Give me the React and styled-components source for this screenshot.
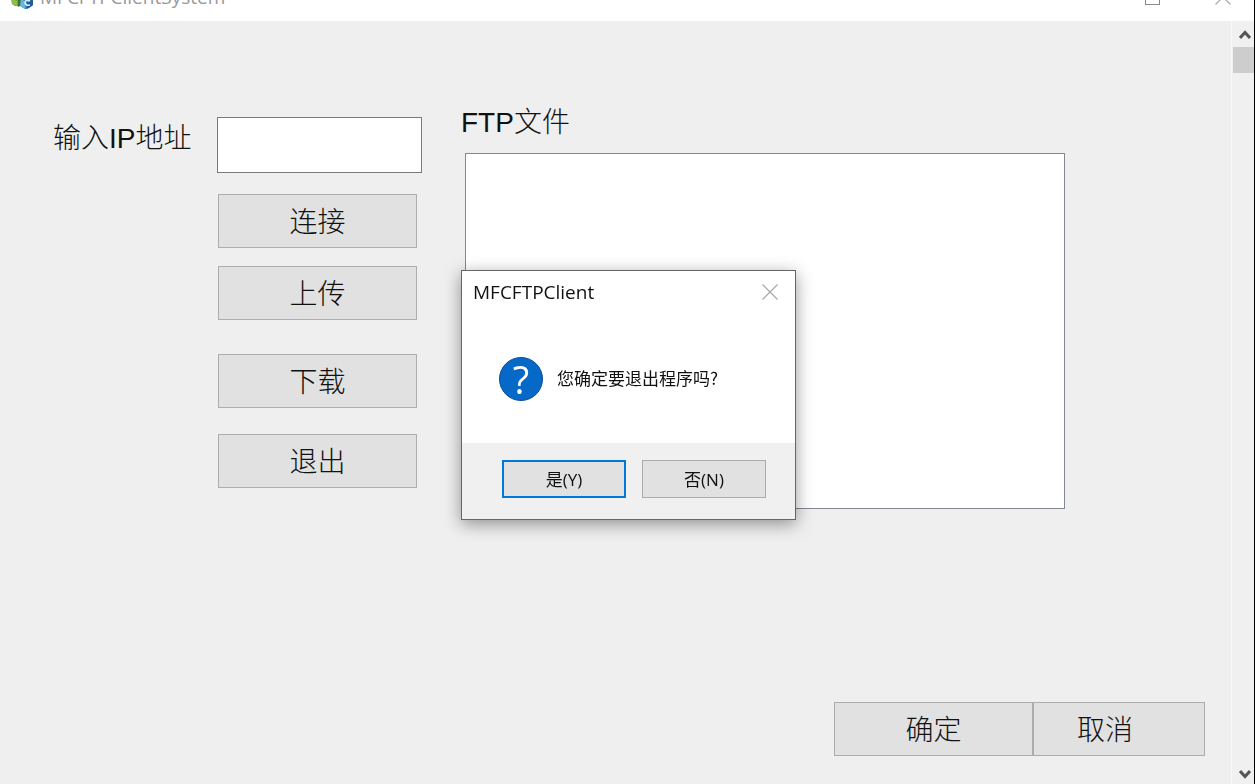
import React, { useState } from 'react';
import styled, { createGlobalStyle } from 'styled-components';

const App = () => {
  const [address, setAddress] = useState('');
  const [confirming, setConfirming] = useState(true);

  const askExit = () => setConfirming(true);
  const closeDialog = () => setConfirming(false);

  return (
    <Window>
      <GlobalStyle />
      <TitleBar>
        <AppIcon />
        <WindowTitle>MFCFTPClientSystem</WindowTitle>
        <CaptionButton aria-label="Maximize">
          <svg width="16" height="16" viewBox="0 0 16 16">
            <rect x="0.5" y="1.5" width="14" height="14" fill="none" stroke="#8a8a8a" />
          </svg>
        </CaptionButton>
        <CaptionButton aria-label="Close" onClick={askExit}>
          <CloseIcon />
        </CaptionButton>
      </TitleBar>

      <Body>
        <Form>
          <Columns>
            <AddressLabel htmlFor="address">输入IP地址</AddressLabel>
            <Controls>
              <AddressInput
                id="address"
                value={address}
                onChange={e => setAddress(e.target.value)}
              />
              <FormButton $gap={21}>连接</FormButton>
              <FormButton $gap={18}>上传</FormButton>
              <FormButton $gap={34}>下载</FormButton>
              <FormButton $gap={26} onClick={askExit}>退出</FormButton>
            </Controls>
            <Files>
              <FilesLabel htmlFor="files">FTP文件</FilesLabel>
              <FileList id="files" multiple />
            </Files>
          </Columns>
          <Footer>
            <FormButton>确定</FormButton>
            <CancelButton onClick={askExit}>取消</CancelButton>
          </Footer>
        </Form>

        <ScrollBar>
          <ScrollButton aria-label="Scroll up">
            <Chevron d="M1 9 L6 3.5 L11 9" />
          </ScrollButton>
          <Thumb />
          <ScrollButton aria-label="Scroll down">
            <Chevron d="M1 3 L6 8.5 L11 3" />
          </ScrollButton>
        </ScrollBar>
      </Body>

      {confirming && (
        <Overlay>
          <Dialog role="dialog" aria-labelledby="dialog-title">
            <DialogHeader>
              <DialogTitle id="dialog-title">MFCFTPClient</DialogTitle>
              <DialogClose aria-label="Close" onClick={closeDialog}>
                <CloseIcon />
              </DialogClose>
            </DialogHeader>
            <Message>
              <QuestionMark aria-hidden="true">?</QuestionMark>
              <MessageText>您确定要退出程序吗?</MessageText>
            </Message>
            <DialogFooter>
              <DialogButton $primary onClick={closeDialog}>是(Y)</DialogButton>
              <DialogButton onClick={closeDialog}>否(N)</DialogButton>
            </DialogFooter>
          </Dialog>
        </Overlay>
      )}
    </Window>
  );
};

const CloseIcon = () => (
  <svg width="16" height="16" viewBox="0 0 16 16">
    <path d="M0.5 0.5 L15.5 15.5 M15.5 0.5 L0.5 15.5" fill="none" stroke="#a8a8a8" strokeWidth="1.2" />
  </svg>
);

const Chevron = ({ d }) => (
  <svg width="12" height="12" viewBox="0 0 12 12">
    <path d={d} fill="none" stroke="#555" strokeWidth="3" />
  </svg>
);

// Green and blue cubes of the default MFC icon
const AppIcon = () => (
  <svg width="24" height="24" viewBox="0 0 24 24">
    <path d="M6 1 L14 0 L18 4 L17 10 L8 11 L5 7 Z" fill="#e3a93c" />
    <path d="M1 12 Q4 9 11 10 L12 20 Q6 23 2 19 Z" fill="#6fa53a" />
    <path d="M1 13 L7 16 L7 21 L2 19 Z" fill="#8fbc4c" />
    <path d="M8 15 L12 13 L12 20 L8 22 Z" fill="#3f7427" />
    <path d="M11 13 Q17 9 23 13 L23 20 Q19 24 15 24 L10 21 Z" fill="#2f7fbc" />
    <path d="M11 14 L16 17 L15 24 L10 21 Z" fill="#6cb4dd" />
    <path d="M17 17 L23 14 L23 20 L17 24 Z" fill="#205b97" />
    <path d="M20 16 Q15 14 15 18 Q16 21 20 20" fill="none" stroke="#d9edf8" strokeWidth="1.6" />
  </svg>
);

const GlobalStyle = createGlobalStyle`
  * {
    box-sizing: border-box;
  }

  body {
    margin: 0;
    color: #111;
    font-family: "Liberation Sans", "Noto Sans CJK SC", sans-serif;
  }

  button {
    padding: 0;
    font-family: inherit;
    color: inherit;
  }

  svg {
    display: block;
    flex-shrink: 0;
  }
`;

const Window = styled.div`
  display: flex;
  flex-direction: column;
  min-height: 100vh;
  border-right: 1px solid #000;
  background-color: #efefef;
`;

const TitleBar = styled.header`
  display: flex;
  align-items: flex-end;
  flex-shrink: 0;
  height: 21px;
  padding: 0 23px 12px 10px;
  overflow: hidden;
  background-color: white;
`;

const WindowTitle = styled.span`
  flex: 1;
  margin-left: 6px;
  font-family: "Open Sans", "Noto Sans", sans-serif;
  font-size: 19px;
  line-height: 24px;
  color: #999;
`;

const CaptionButton = styled.button`
  margin-left: 54px;
  padding-bottom: 4px;
  border: none;
  background: none;
`;

const Body = styled.div`
  display: flex;
  flex: 1;
`;

const Form = styled.main`
  display: flex;
  flex: 1;
  flex-direction: column;
  justify-content: space-between;
  padding: 80px 26px 28px 53px;
`;

const Columns = styled.div`
  display: flex;
  align-items: flex-start;
  padding-right: 140px;
`;

const AddressLabel = styled.label`
  width: 164px;
  margin-top: 20px;
  font-size: 28px;
  line-height: 36px;
  font-weight: 300;
`;

const Controls = styled.div`
  display: flex;
  flex-direction: column;
  margin-top: 16px;
`;

const AddressInput = styled.input`
  width: 205px;
  height: 56px;
  padding: 0 8px;
  border: 1px solid #7a7a7a;
  background-color: white;
  font-size: 28px;
  outline: none;
`;

const FormButton = styled.button`
  width: 199px;
  height: 54px;
  margin-top: ${props => props.$gap || 0}px;
  padding-bottom: 2px;
  border: 1px solid #adadad;
  background-color: #e1e1e1;
  font-size: 28px;
  font-weight: 300;

  ${Controls} & {
    margin-left: 1px;
  }
`;

const CancelButton = styled(FormButton)`
  width: 172px;
  padding-right: 28px;
`;

const Files = styled.div`
  display: flex;
  flex: 1;
  flex-direction: column;
  margin-left: 39px;
`;

const FilesLabel = styled.label`
  margin-top: 4px;
  font-size: 28px;
  line-height: 36px;
  font-weight: 300;
`;

const FileList = styled.select`
  height: 356px;
  margin: 12px 0 0 4px;
  border: 1px solid #828790;
  border-radius: 0;
  background-color: white;
  outline: none;
`;

const Footer = styled.footer`
  display: flex;
  justify-content: flex-end;
`;

const ScrollBar = styled.div`
  display: flex;
  flex-direction: column;
  width: 23px;
  border-left: 1px solid #f8f8f8;
  background-color: #f0f0f0;
`;

const ScrollButton = styled.button`
  display: flex;
  align-items: center;
  justify-content: flex-end;
  height: 26px;
  padding: 2px 3px 0 0;
  border: none;
  background: none;

  &:last-child {
    height: 22px;
    margin-top: auto;
  }
`;

const Thumb = styled.div`
  height: 26px;
  margin-left: 1px;
  background-color: #cdcdcd;
`;

const Overlay = styled.div`
  position: fixed;
  inset: 0;
  display: flex;
  align-items: center;
  justify-content: center;
  padding: 6px 0 0 2px;
`;

const Dialog = styled.section`
  width: 335px;
  border: 1px solid #666;
  background-color: white;
  box-shadow: 0 4px 16px rgba(0, 0, 0, 0.4);
  font-family: "Open Sans", "Noto Sans CJK SC", sans-serif;
`;

const DialogHeader = styled.div`
  display: flex;
  align-items: center;
  justify-content: space-between;
  height: 44px;
  padding: 0 17px 2px 11px;
`;

const DialogTitle = styled.h1`
  margin: 0;
  font-size: 19px;
  line-height: 24px;
  font-weight: 400;
`;

const DialogClose = styled.button`
  border: none;
  background: none;
`;

const Message = styled.div`
  display: flex;
  align-items: center;
  height: 128px;
  padding: 0 37px;
`;

const QuestionMark = styled.span`
  width: 44px;
  height: 44px;
  border: 1px solid #0a4f94;
  border-radius: 50%;
  background-color: #0669c8;
  color: white;
  font-size: 38px;
  line-height: 42px;
  text-align: center;
`;

const MessageText = styled.p`
  margin: 0 0 2px 14px;
  font-family: "Noto Sans CJK SC", sans-serif;
  font-size: 17px;
  line-height: 24px;
  white-space: nowrap;
`;

const DialogFooter = styled.div`
  display: flex;
  justify-content: flex-end;
  gap: 16px;
  padding: 17px 29px 21px;
  background-color: #f0f0f0;
`;

const DialogButton = styled.button`
  width: 124px;
  height: 38px;
  padding-bottom: 2px;
  border: ${props => (props.$primary ? '2px solid #0078d7' : '1px solid #adadad')};
  background-color: #e1e1e1;
  font-size: 17px;
`;

export default App;
